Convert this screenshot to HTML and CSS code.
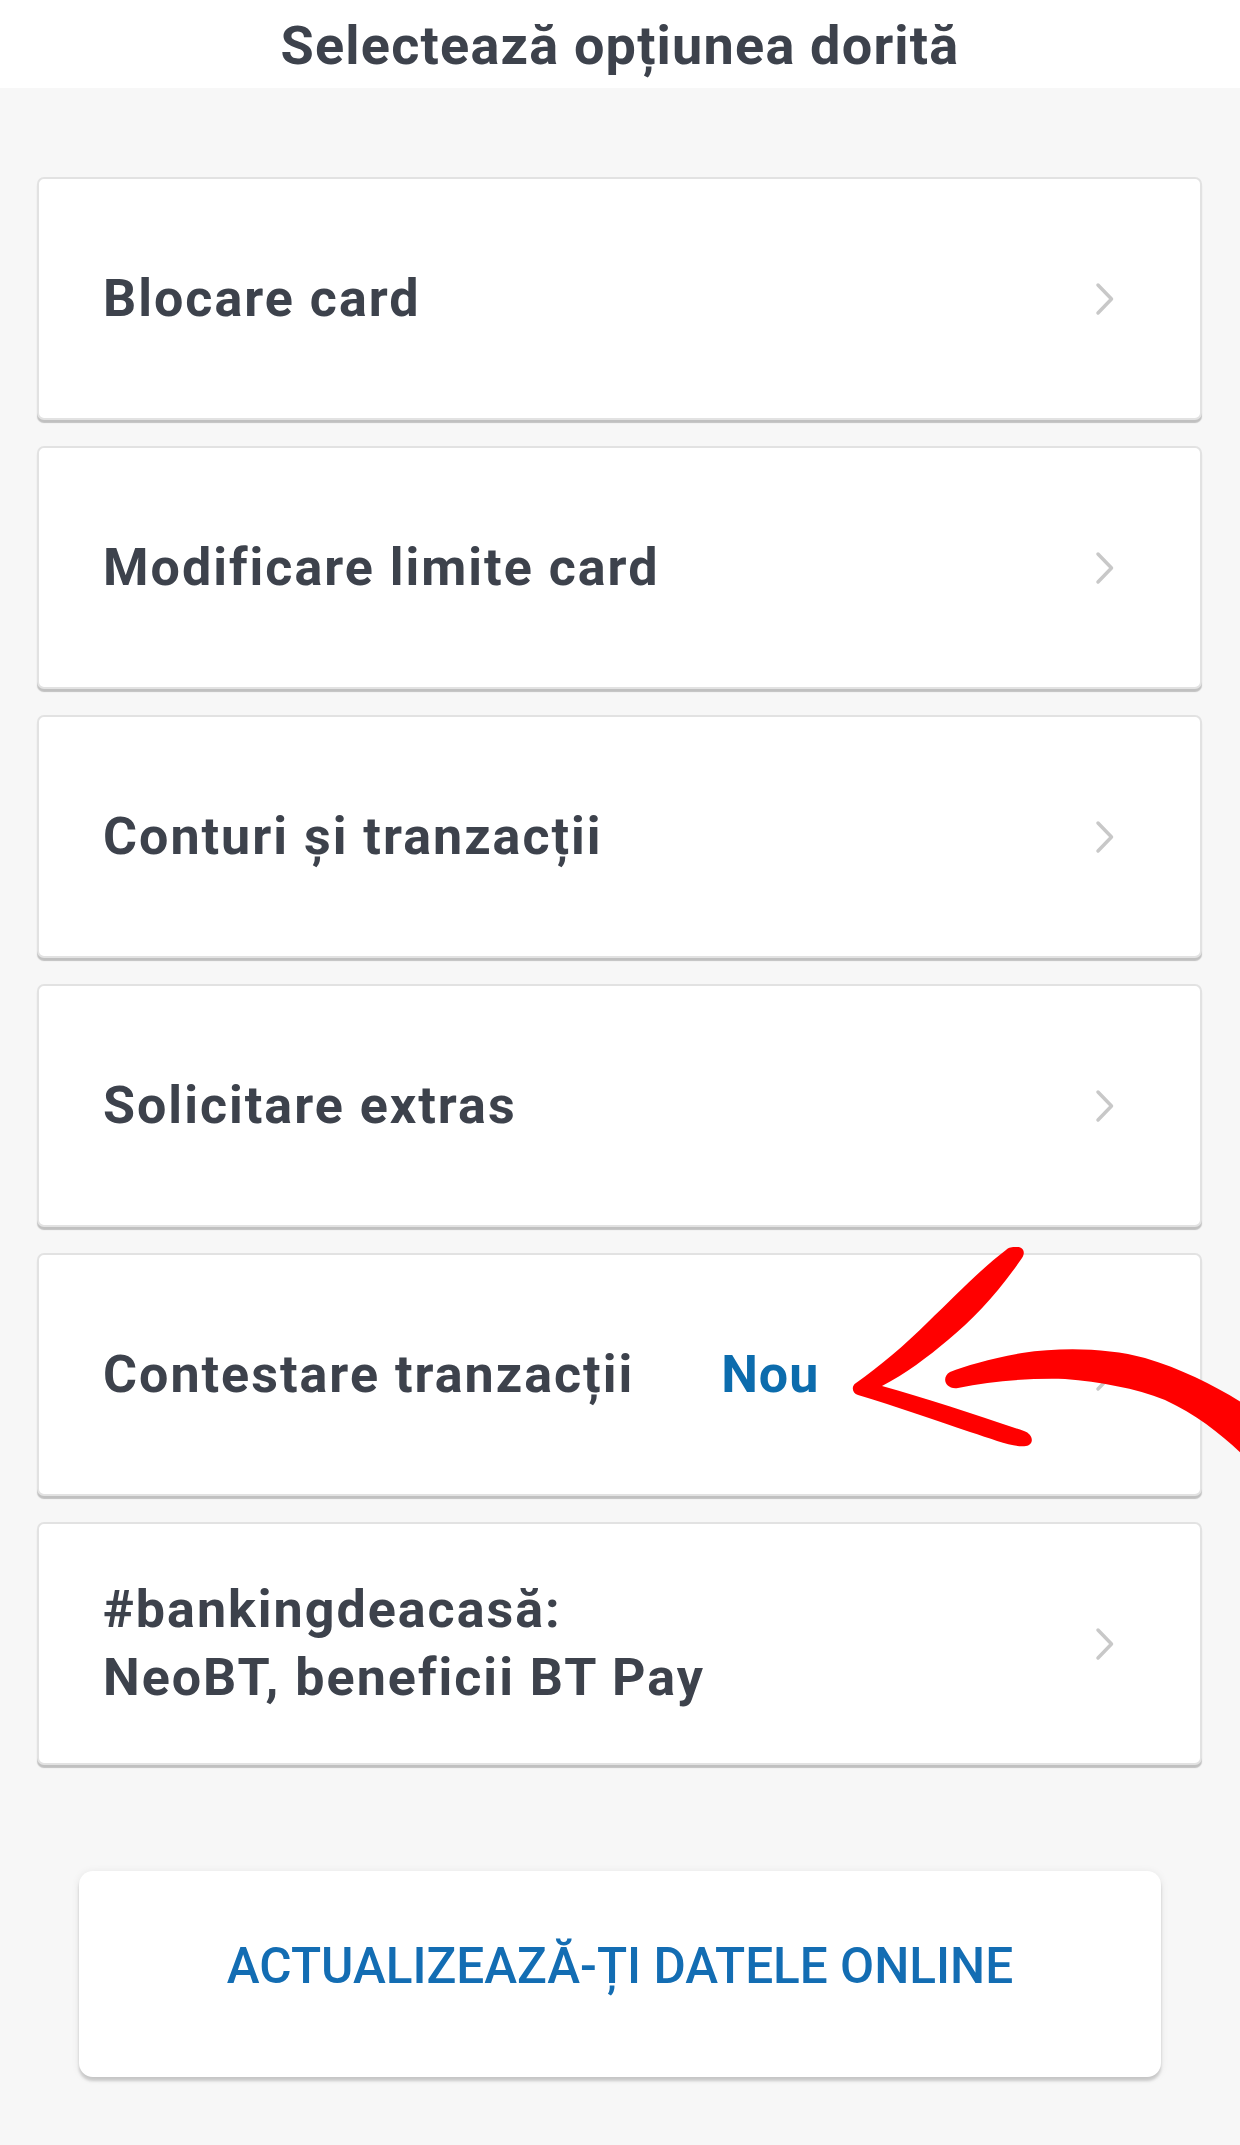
FILE: index.html
```html
<!DOCTYPE html>
<html lang="ro">
<head>
<meta charset="utf-8">
<title>Selectează opțiunea dorită</title>
<link rel="stylesheet" href="styles.css">
</head>
<body>
<header class="top">
  <h1 class="title">Selectează opțiunea dorită</h1>
</header>
<main class="page">
  <ul class="options">
    <li class="option">
      <span class="label">Blocare card</span>
      <svg class="chev" viewBox="0 0 20 34" width="20" height="34"><path d="M3 3 L16.5 17 L3 31"/></svg>
    </li>
    <li class="option">
      <span class="label">Modificare limite card</span>
      <svg class="chev" viewBox="0 0 20 34" width="20" height="34"><path d="M3 3 L16.5 17 L3 31"/></svg>
    </li>
    <li class="option">
      <span class="label">Conturi și tranzacții</span>
      <svg class="chev" viewBox="0 0 20 34" width="20" height="34"><path d="M3 3 L16.5 17 L3 31"/></svg>
    </li>
    <li class="option">
      <span class="label">Solicitare extras</span>
      <svg class="chev" viewBox="0 0 20 34" width="20" height="34"><path d="M3 3 L16.5 17 L3 31"/></svg>
    </li>
    <li class="option">
      <span class="label">Contestare tranzacții</span>
      <span class="badge">Nou</span>
      <svg class="chev" viewBox="0 0 20 34" width="20" height="34"><path d="M3 3 L16.5 17 L3 31"/></svg>
    </li>
    <li class="option">
      <span class="label label-multi">#bankingdeacasă:<br>NeoBT, beneficii BT Pay</span>
      <svg class="chev" viewBox="0 0 20 34" width="20" height="34"><path d="M3 3 L16.5 17 L3 31"/></svg>
    </li>
  </ul>
  <div class="actions">
    <button class="update" type="button">ACTUALIZEAZĂ-ȚI DATELE ONLINE</button>
  </div>
</main>
<svg class="annot" viewBox="840 1240 400 220" width="400" height="220">
  <path class="ink" d="M1016 1247
    C1023 1246 1026 1252 1022 1258
    C1000 1290 975 1318 948 1340
    C928 1357 905 1374 882 1386
    C925 1398 980 1416 1024 1431
    C1033 1434 1035 1444 1026 1446
    C1015 1448 995 1440 970 1432
    C935 1420 895 1406 858 1395
    C852 1393 851 1386 856 1383
    C880 1366 905 1345 928 1322
    C955 1296 982 1268 1006 1250
    C1009 1247 1012 1247 1016 1247 Z"/>
  <path class="ink" d="M950 1372
    C965 1366 992 1358 1022 1353
    C1062 1347 1108 1348 1145 1358
    C1185 1370 1220 1388 1250 1408
    L1250 1462
    C1228 1440 1200 1416 1165 1400
    C1135 1388 1100 1382 1065 1379
    C1030 1378 992 1381 958 1388
    C945 1390 941 1377 950 1372 Z"/>
</svg>
</body>
</html>
```

FILE: styles.css
```css
* {
  box-sizing: border-box;
}

html, body {
  margin: 0;
  padding: 0;
}

body {
  position: relative;
  width: 1240px;
  min-height: 2145px;
  background: #f7f7f7;
  font-family: Roboto, "Noto Sans", "Liberation Sans", sans-serif;
  color: #3d424c;
  overflow: hidden;
}

.top {
  height: 88px;
  background: #ffffff;
  padding-top: 4px;
}

.title {
  margin: 0;
  text-align: center;
  font-size: 54px;
  line-height: 84px;
  font-weight: 700;
  letter-spacing: 1.2px;
  color: #3d424c;
}

.page {
  padding-top: 89px;
}

.options {
  list-style: none;
  margin: 0;
  padding: 0 38px 0 37px;
  display: flex;
  flex-direction: column;
  gap: 26px;
}

.option {
  height: 243px;
  display: flex;
  align-items: center;
  padding: 0 85px 0 64px;
  background: #ffffff;
  border: 2px solid #e2e2e2;
  border-radius: 7px;
  box-shadow: 0 3px 1px rgba(0, 0, 0, 0.22);
}

.label {
  font-size: 52px;
  font-weight: 700;
  letter-spacing: 2px;
  color: #3d424c;
}

.label-multi {
  line-height: 68px;
}

.badge {
  margin-left: 87px;
  font-size: 52px;
  font-weight: 700;
  letter-spacing: 1px;
  color: #0c6cad;
}

.chev {
  margin-left: auto;
  flex: none;
}

.chev path {
  fill: none;
  stroke: #c8c8c8;
  stroke-width: 3.5;
  stroke-linecap: round;
  stroke-linejoin: round;
}

.actions {
  padding: 106px 79px 0 79px;
}

.update {
  display: block;
  width: 100%;
  height: 206px;
  padding: 0 0 17px 0;
  border: none;
  border-radius: 14px;
  background: #ffffff;
  box-shadow: 0 1px 8px rgba(0, 0, 0, 0.08), 0 4px 3px rgba(0, 0, 0, 0.16);
  font-family: Roboto, "Noto Sans", "Liberation Sans", sans-serif;
  font-size: 49.5px;
  font-weight: 500;
  color: #136db3;
  text-align: center;
}

.annot {
  position: absolute;
  left: 840px;
  top: 1240px;
  overflow: visible;
}

.ink {
  fill: #ff0000;
}
```
